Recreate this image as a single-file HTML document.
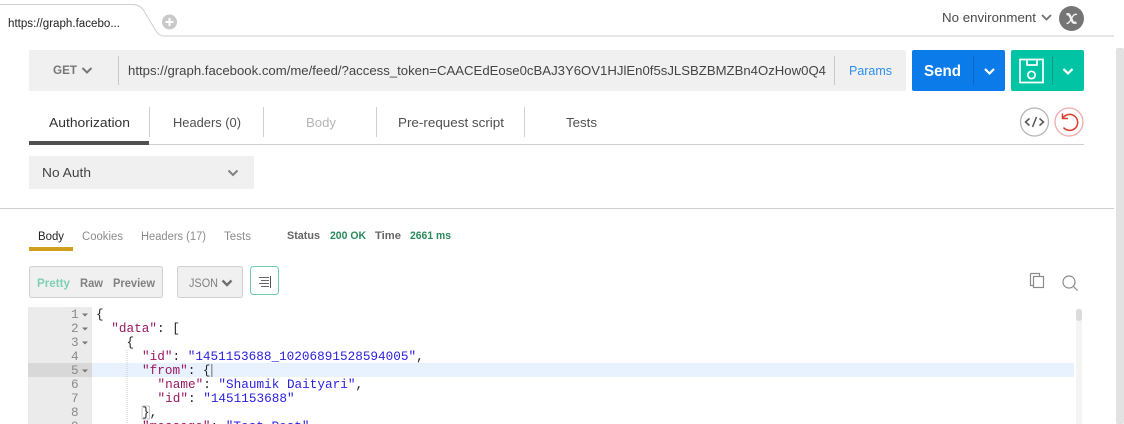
<!DOCTYPE html>
<html><head><meta charset="utf-8"><style>
html,body{margin:0;padding:0;background:#fff;width:1124px;height:424px;overflow:hidden}
svg{display:block}
text{font-family:"Liberation Sans",sans-serif;font-size:13px;fill:#505050}
.m{font-family:"Liberation Mono",monospace;font-size:12.7px;white-space:pre}
.k{fill:#9b1764}.s{fill:#2a1ee0}.p{fill:#222}.n{fill:#8a8a8a;font-family:"Liberation Mono",monospace;font-size:12.7px}
</style></head><body>
<svg width="1124" height="424" viewBox="0 0 1124 424" xmlns="http://www.w3.org/2000/svg">
<rect width="1124" height="424" fill="#fff"/>
<path d="M0 4.500H133Q140 4.500 144 11L156 31Q159 36 164 36H1114" fill="none" stroke="#cfcfcf" stroke-width="1"/>
<text x="8" y="27" style="font-size:11.500px;fill:#222" textLength="112" lengthAdjust="spacingAndGlyphs">https://graph.facebo...</text>
<circle cx="169.500" cy="22" r="7.500" fill="#c9c9c9"/><path d="M169.500 18V26M165.500 22H173.500" stroke="#fff" stroke-width="2"/>
<text x="942" y="22" textLength="94" lengthAdjust="spacingAndGlyphs" style="fill:#4a4a4a">No environment</text>
<path d="M1042 15L1046.500 19.500L1051 15" fill="none" stroke="#707070" stroke-width="1.800"/>
<circle cx="1071.500" cy="18.500" r="12.500" fill="#757575"/>
<path d="M1066.500 14.500Q1069 13.500 1070 16L1072.500 21.500Q1073.500 23.500 1076.500 22.500" fill="none" stroke="#f2f2f2" stroke-width="2.400"/>
<path d="M1066.500 23.500Q1068.500 23.500 1070 21L1073 16Q1074.500 13.800 1077 14.500" fill="none" stroke="#f2f2f2" stroke-width="1.300"/>
<rect x="1116" y="48" width="8" height="376" rx="2" fill="#e2e2e2"/>

<rect x="29" y="50" width="877" height="41" rx="2" fill="#f0f0f0"/>
<text x="53" y="74" textLength="24" lengthAdjust="spacingAndGlyphs" style="font-size:11.500px;font-weight:bold;fill:#777">GET</text>
<path d="M82.500 68L87 72.500L91.500 68" fill="none" stroke="#777" stroke-width="2"/>
<rect x="118" y="56" width="1" height="29" fill="#c8c8c8"/>
<text x="128" y="75" textLength="698" lengthAdjust="spacingAndGlyphs" style="fill:#444">https://graph.facebook.com/me/feed/?access_token=CAACEdEose0cBAJ3Y6OV1HJlEn0f5sJLSBZBMZBn4OzHow0Q4</text>
<rect x="834" y="56" width="1" height="29" fill="#c8c8c8"/>
<text x="849" y="75" textLength="43" lengthAdjust="spacingAndGlyphs" style="fill:#2f8fee">Params</text>

<rect x="912" y="50" width="93" height="41" rx="2" fill="#0c7bea"/>
<text x="924" y="76" textLength="37" lengthAdjust="spacingAndGlyphs" style="font-size:16px;font-weight:bold;fill:#fff">Send</text>
<rect x="973" y="56" width="1" height="29" fill="#0a66c4"/>
<path d="M985 69L989.500 73.500L994 69" fill="none" stroke="#fff" stroke-width="2.200"/>
<rect x="1011" y="50" width="73" height="41" rx="2" fill="#00c4a3"/>
<path d="M1020 59.500H1043V82.500H1020Z" fill="none" stroke="#fff" stroke-width="1.700"/>
<path d="M1027 59.500V65H1037V59.500" fill="none" stroke="#fff" stroke-width="1.700"/>
<circle cx="1031.500" cy="75" r="3.700" fill="none" stroke="#fff" stroke-width="1.700"/>
<rect x="1052" y="56" width="1" height="29" fill="#00a286"/>
<path d="M1063.500 69L1068 73.500L1072.500 69" fill="none" stroke="#fff" stroke-width="2.200"/>

<text x="49" y="127" textLength="81" lengthAdjust="spacingAndGlyphs" style="fill:#333">Authorization</text>
<text x="173" y="127" textLength="68" lengthAdjust="spacingAndGlyphs">Headers (0)</text>
<text x="306" y="127" textLength="30" lengthAdjust="spacingAndGlyphs" style="fill:#b5b5b5">Body</text>
<text x="398" y="127" textLength="106" lengthAdjust="spacingAndGlyphs">Pre-request script</text>
<text x="566" y="127" textLength="31" lengthAdjust="spacingAndGlyphs">Tests</text>
<g fill="#cfcfcf"><rect x="149" y="107" width="1" height="30"/><rect x="263" y="107" width="1" height="30"/><rect x="376" y="107" width="1" height="30"/><rect x="524" y="107" width="1" height="30"/></g>
<rect x="29" y="144" width="1055" height="1" fill="#cfcfcf"/>
<rect x="29" y="141" width="120" height="4" fill="#505050"/>
<circle cx="1034.500" cy="122" r="14" fill="#fff" stroke="#b5b5b5" stroke-width="1.300"/>
<path d="M1029.500 118.500L1025.500 122L1029.500 125.500M1039.500 118.500L1043.500 122L1039.500 125.500M1036.500 117L1032.500 127" fill="none" stroke="#555" stroke-width="1.500"/>
<circle cx="1069" cy="122" r="14" fill="#fff" stroke="#efaaaa" stroke-width="1.300"/>
<path d="M1063 118A8 8 0 1 1 1063.500 127.500M1062.500 113.500V118.500H1068" fill="none" stroke="#dc3a2c" stroke-width="1.500"/>
<rect x="29" y="156" width="225" height="33" fill="#f0f0f0"/>
<text x="42" y="177" textLength="49" lengthAdjust="spacingAndGlyphs" style="fill:#444">No Auth</text>
<path d="M228.500 170.500L233 175L237.500 170.500" fill="none" stroke="#808080" stroke-width="2"/>

<rect x="0" y="208" width="1114" height="1" fill="#cfcfcf"/>
<text x="38" y="240" textLength="26" lengthAdjust="spacingAndGlyphs" style="font-size:11.500px;fill:#222">Body</text>
<text x="82" y="240" textLength="41" lengthAdjust="spacingAndGlyphs" style="font-size:11.500px;fill:#8c8c8c">Cookies</text>
<text x="141" y="240" textLength="65" lengthAdjust="spacingAndGlyphs" style="font-size:11.500px;fill:#8c8c8c">Headers (17)</text>
<text x="224" y="240" textLength="27" lengthAdjust="spacingAndGlyphs" style="font-size:11.500px;fill:#8c8c8c">Tests</text>
<rect x="29" y="247" width="44" height="4" fill="#d0a01e"/>
<text x="287" y="239" textLength="33" lengthAdjust="spacingAndGlyphs" style="font-size:11px;font-weight:bold;fill:#666">Status</text>
<text x="330" y="239" textLength="36" lengthAdjust="spacingAndGlyphs" style="font-size:11px;font-weight:bold;fill:#2a8a5a">200 OK</text>
<text x="375" y="239" textLength="26" lengthAdjust="spacingAndGlyphs" style="font-size:11px;font-weight:bold;fill:#666">Time</text>
<text x="410" y="239" textLength="41" lengthAdjust="spacingAndGlyphs" style="font-size:11px;font-weight:bold;fill:#2a8a5a">2661 ms</text>

<rect x="29.500" y="266.500" width="133" height="31" rx="2" fill="#f0f0f0" stroke="#d0d0d0"/>
<text x="37" y="287" textLength="33" lengthAdjust="spacingAndGlyphs" style="font-size:11.500px;font-weight:bold;fill:#7fd0b6">Pretty</text>
<text x="80" y="287" textLength="23" lengthAdjust="spacingAndGlyphs" style="font-size:11.500px;font-weight:bold;fill:#808080">Raw</text>
<text x="113" y="287" textLength="42" lengthAdjust="spacingAndGlyphs" style="font-size:11.500px;font-weight:bold;fill:#808080">Preview</text>
<rect x="177.500" y="266.500" width="65" height="31" rx="2" fill="#f0f0f0" stroke="#d0d0d0"/>
<text x="189" y="287" textLength="29" lengthAdjust="spacingAndGlyphs" style="font-size:11.500px;fill:#808080">JSON</text>
<path d="M222.500 280.500L227 285L231.500 280.500" fill="none" stroke="#707070" stroke-width="2.400"/>
<rect x="250.500" y="266.500" width="28" height="28" rx="3" fill="#fff" stroke="#6fcbb0"/>
<path d="M259 277.500H269M261 280.500H269M259 283.500H269M261 286.500H269" stroke="#666" stroke-width="1"/>
<rect x="270" y="276" width="1" height="12" fill="#555"/>

<path d="M1030.500 273.500H1039.500V277M1030.500 273.500V285.500H1033" fill="none" stroke="#8a8a8a" stroke-width="1.200"/>
<rect x="1033.500" y="276.500" width="10" height="11" fill="#fff" stroke="#8a8a8a" stroke-width="1.200"/>
<circle cx="1069" cy="282" r="6" fill="none" stroke="#8a8a8a" stroke-width="1.200"/>
<path d="M1073.500 286.500L1077.500 290.500" stroke="#8a8a8a" stroke-width="1.200"/>

<rect x="28" y="307" width="64" height="117" fill="#ebebeb"/>
<rect x="28" y="363" width="64" height="14" fill="#d8d8d8"/>
<rect x="92" y="363" width="982" height="14" fill="#e8f2ff"/>
<rect x="1076" y="309" width="6" height="115" fill="#f4f4f4"/>
<rect x="1076" y="309" width="6" height="12" rx="3" fill="#dcdcdc"/>
<path d="M127 350V424" stroke="#ccc" stroke-dasharray="1 1"/>

<g class="n">
<text class="n" x="71" y="318">1</text><text class="n" x="71" y="332">2</text><text class="n" x="71" y="346">3</text><text class="n" x="71" y="360">4</text><text class="n" x="71" y="374">5</text><text class="n" x="71" y="388">6</text><text class="n" x="71" y="402">7</text><text class="n" x="71" y="416">8</text><text class="n" x="71" y="430">9</text>
</g>
<g fill="#777"><path d="M82 313.500H88L85 316.500Z"/><path d="M82 327.500H88L85 330.500Z"/><path d="M82 341.500H88L85 344.500Z"/><path d="M82 369.500H88L85 372.500Z"/></g>

<text class="m" x="96" y="318"><tspan class="p">{</tspan></text>
<text class="m" x="111.300" y="332"><tspan class="k">"data"</tspan><tspan class="p">: [</tspan></text>
<text class="m" x="126.500" y="346"><tspan class="p">{</tspan></text>
<text class="m" x="142" y="360"><tspan class="k">"id"</tspan><tspan class="p">: </tspan><tspan class="s">"1451153688_10206891528594005"</tspan><tspan class="p">,</tspan></text>
<text class="m" x="142" y="374"><tspan class="k">"from"</tspan><tspan class="p">: {</tspan></text>
<rect x="211" y="364" width="1.500" height="13" fill="#999"/>
<text class="m" x="157.500" y="388"><tspan class="k">"name"</tspan><tspan class="p">: </tspan><tspan class="s">"Shaumik Daityari"</tspan><tspan class="p">,</tspan></text>
<text class="m" x="157.500" y="402"><tspan class="k">"id"</tspan><tspan class="p">: </tspan><tspan class="s">"1451153688"</tspan></text>
<text class="m" x="142" y="416"><tspan class="p">},</tspan></text>
<rect x="142" y="406" width="7.500" height="13" fill="none" stroke="#bbb" stroke-width="0.800"/>
<text class="m" x="142" y="430"><tspan class="k">"message"</tspan><tspan class="p">: </tspan><tspan class="s">"Test Post"</tspan><tspan class="p">,</tspan></text>
</svg>
</body></html>
